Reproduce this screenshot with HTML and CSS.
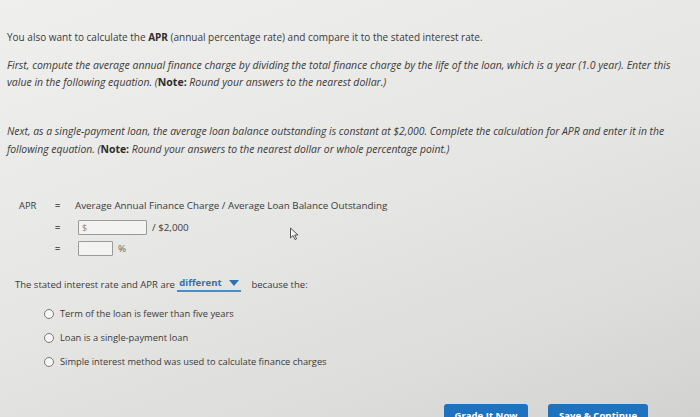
FILE: index.html
```html
<!DOCTYPE html>
<html>
<head>
<meta charset="utf-8">
<link rel="stylesheet" href="styles.css">
</head>
<body>
<div class="page">
  <p class="intro">You also want to calculate the <b>APR</b> (annual percentage rate) and compare it to the stated interest rate.</p>
  <p class="step">First, compute the average annual finance charge by dividing the total finance charge by the life of the loan, which is a year (1.0 year). Enter this value in the following equation. (<b class="note">Note:</b> Round your answers to the nearest dollar.)</p>
  <p class="step step2">Next, as a single-payment loan, the average loan balance outstanding is constant at $2,000. Complete the calculation for APR and enter it in the following equation. (<b class="note">Note:</b> Round your answers to the nearest dollar or whole percentage point.)</p>

  <div class="eq">
    <span class="eq-label">APR</span>
    <span class="eq-sign">=</span>
    <span class="eq-body">Average Annual Finance Charge / Average Loan Balance Outstanding</span>

    <span class="eq-label"></span>
    <span class="eq-sign">=</span>
    <span class="eq-body eq-input"><span class="box box-wide">$</span><span class="after">/ $2,000</span>
      <svg class="cursor" width="12" height="14" viewBox="0 0 12 14"><path d="M1.5 1 L1.5 11 L4 8.6 L6 12.6 L7.6 11.8 L5.7 8 L9 8 Z" fill="#f4f4f2" stroke="#444" stroke-width="0.9" stroke-linejoin="round"/></svg>
    </span>

    <span class="eq-label"></span>
    <span class="eq-sign">=</span>
    <span class="eq-body eq-input"><span class="box box-small"></span><span class="after pct">%</span></span>
  </div>

  <p class="stated">The stated interest rate and APR are <span class="dd">different <svg width="10" height="6" viewBox="0 0 10 6"><path d="M0 0 L10 0 L5 6 Z" fill="#2b74b3"/></svg></span> because the:</p>

  <ul class="opts">
    <li><span class="radio"></span>Term of the loan is fewer than five years</li>
    <li><span class="radio"></span>Loan is a single-payment loan</li>
    <li><span class="radio"></span>Simple interest method was used to calculate finance charges</li>
  </ul>

  <div class="actions">
    <span class="btn btn-grade">Grade It Now</span>
    <span class="btn btn-save">Save &amp; Continue</span>
  </div>
</div>
</body>
</html>
```
FILE: styles.css
```css
html, body {
  margin: 0;
  padding: 0;
  height: 100%;
  overflow: hidden;
}
body {
  background: linear-gradient(160deg, #efefed 0%, #e7e7e5 45%, #dcdcda 80%, #d2d2d0 100%);
  font-family: "Open Sans", "Liberation Sans", sans-serif;
  color: #3a3a3a;
  font-size: 10px;
}
.page {
  padding: 30px 0 0 7px;
  width: 690px;
}
p { margin: 0; }
.intro { line-height: 14px; }
.intro b { color: #2e2e2e; }
.step {
  margin-top: 13px;
  font-style: italic;
  line-height: 17px;
  width: 672px;
  font-size: 10.5px;
}
.step2 { margin-top: 31px; width: 668px; font-size: 10.4px; line-height: 18px; }
.note { font-style: normal; color: #2e2e2e; line-height: 1; }

.eq {
  margin-top: 37px;
  display: grid;
  grid-template-columns: 36px 20px auto;
  grid-template-rows: 20px 24px 18px;
  align-items: center;
  padding-left: 12px;
}
.eq-label { font-size: 9.4px; }
.eq-sign {
  font-weight: bold;
  color: #555;
  font-size: 9px;
}
.eq-body {
  display: flex;
  align-items: center;
  font-size: 9.8px;
}
.eq-input { margin-left: 3px; }
.box {
  display: inline-block;
  height: 15px;
  border: 1px solid #9a9a9a;
  background: #f3f3f1;
  box-sizing: border-box;
  border-radius: 1px;
  font-size: 9px;
  line-height: 13px;
  padding-left: 3px;
  color: #888;
}
.box-wide { width: 69px; }
.box-small { width: 35px; }
.after { margin-left: 5px; }
.pct { color: #666; margin-left: 5px; }
.cursor { margin-left: 100px; margin-top: 14px; }

.stated {
  margin-top: 19px;
  padding-left: 8px;
  display: flex;
  align-items: center;
  white-space: pre;
  font-size: 9.5px;
}
.dd {
  display: inline-flex;
  align-items: center;
  gap: 5px;
  color: #2b74b3;
  font-weight: bold;
  border-bottom: 2px solid #4a8cc4;
  padding: 0 2px 1px 2px;
  margin: 0 8px 0 0;
}

.opts {
  list-style: none;
  margin: 15px 0 0 0;
  padding: 0 0 0 37px;
  display: flex;
  flex-direction: column;
  gap: 11px;
}
.opts li {
  display: flex;
  align-items: center;
  gap: 6px;
  height: 13px;
  font-size: 9.3px;
}
.radio {
  width: 8px;
  height: 8px;
  border: 1px solid #7a7a7a;
  border-radius: 50%;
  background: #f6f6f4;
}

.actions {
  margin-top: 36px;
  display: flex;
  gap: 20px;
  padding-left: 437px;
}
.btn {
  display: inline-block;
  height: 24px;
  border-radius: 3px;
  background: #1f72bd;
  color: #ffffff;
  font-weight: bold;
  font-size: 9.6px;
  text-align: center;
  line-height: 14px;
  box-sizing: border-box;
  padding-top: 5px;
}
.btn-grade { width: 84px; }
.btn-save { width: 100px; }
```
